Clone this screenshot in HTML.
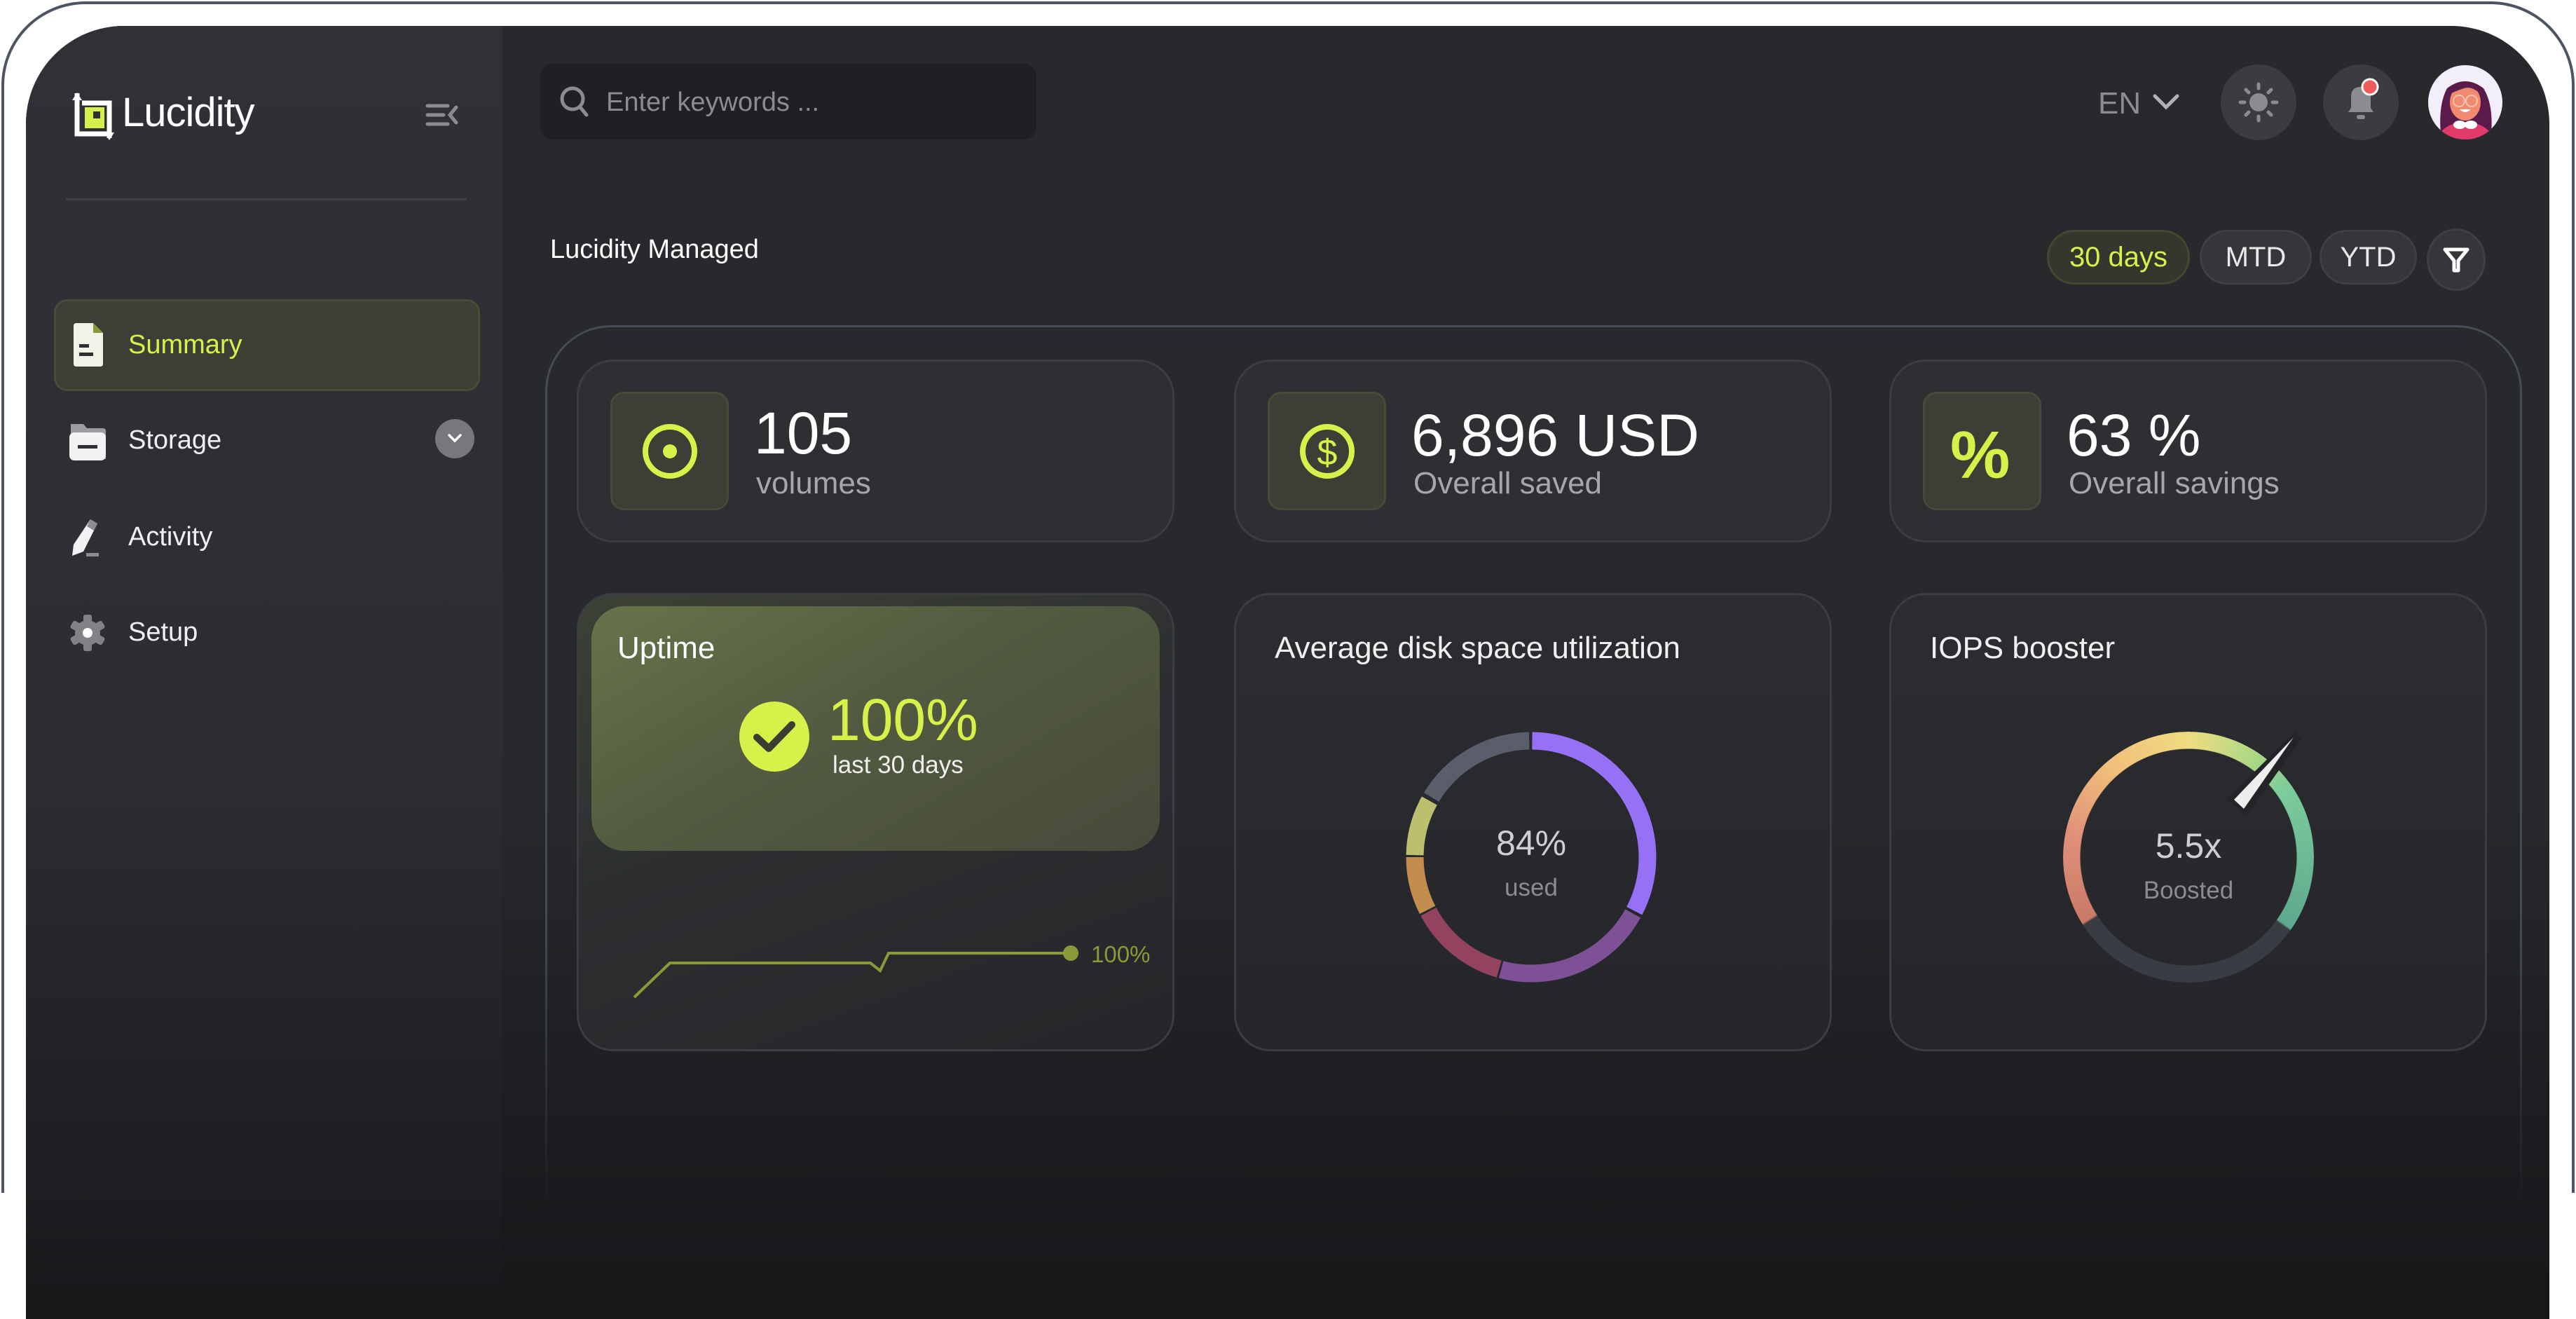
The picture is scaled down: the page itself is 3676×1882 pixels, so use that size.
<!DOCTYPE html>
<html><head><meta charset="utf-8"><style>
*{margin:0;padding:0;box-sizing:border-box}
body{width:3676px;height:1882px;background:#fff;position:relative;overflow:hidden;font-family:"Liberation Sans",sans-serif}
.abs{position:absolute}
.frame{left:2px;top:2px;width:3672px;height:1700px;border:4px solid #4d5462;border-bottom:none;border-radius:120px 120px 0 0;}
.panel{left:37px;top:37px;width:3601px;height:1845px;border-radius:140px 140px 0 0;overflow:hidden;background:linear-gradient(180deg,#28292d 0%,#27292c 60%,#1c1d20 85%,#161719 100%)}
.side{left:0;top:0;width:680px;height:1845px;background:linear-gradient(180deg,#2f3136 0%,#2c2e33 55%,#1d1e21 90%,#161719 100%)}
.t{position:absolute;white-space:nowrap;line-height:1}
.card{position:absolute;background:#2e2f33;border:3px solid #3b3d42;border-radius:52px}
.ib{position:absolute;left:45px;top:43px;width:169px;height:169px;background:#3c3f35;border:3px solid #474a36;border-radius:19px}
.pill{position:absolute;top:291px;height:78px;border-radius:39px;background:#35363a;border:3px solid #3e4045;color:#e9e9ea;font-size:40px;display:flex;align-items:center;justify-content:center}
</style></head><body>
<div class="abs frame"></div>
<div class="abs panel">
 <div class="abs side"></div>
 <!-- logo -->
 <svg class="abs" style="left:66px;top:92px" width="60" height="72" viewBox="0 0 60 72">
  <path d="M7 4 L7 62 L50 62" stroke="#fff" stroke-width="7" fill="none"/>
  <path d="M0 14 L7 3 L14 14Z" fill="#fff"/>
  <path d="M14 18 L53 18 L53 68" stroke="#fff" stroke-width="7" fill="none"/>
  <path d="M46 60 L53 71 L60 60Z" fill="#fff"/>
  <rect x="18" y="24" width="28" height="30" fill="#d5f04a"/>
  <rect x="30" y="30" width="10" height="10" fill="#2f3136"/>
 </svg>
 <div class="t" style="left:137px;top:95px;font-size:58px;color:#fff;letter-spacing:-1px">Lucidity</div>
 <svg class="abs" style="left:570px;top:110px" width="50" height="34" viewBox="0 0 50 34">
  <g stroke="#8a8c90" stroke-width="5" stroke-linecap="round"><path d="M3 4H32M3 17H26M3 30H32M44 6L35 17L44 28" fill="none"/></g>
 </svg>
 <div class="abs" style="left:57px;top:246px;width:572px;height:3px;background:#3e4046"></div>
 <!-- menu -->
 <div class="abs" style="left:40px;top:390px;width:608px;height:131px;background:#3c3f35;border:3px solid #4a4d36;border-radius:19px"></div>
 <svg class="abs" style="left:64px;top:420px" width="50" height="70" viewBox="0 0 50 70"><path d="M6 4H32L46 18V62Q46 66 42 66H8Q4 66 4 62V8Q4 4 8 4Z" fill="#f1f3e8"/><path d="M32 4L46 18H32Z" fill="#8a9a3a"/><rect x="12" y="34" width="14" height="5" fill="#2f3136"/><rect x="12" y="46" width="20" height="5" fill="#2f3136"/></svg>
 <div class="t" style="left:146px;top:436px;font-size:38px;color:#d8f04a">Summary</div>
 <svg class="abs" style="left:60px;top:564px" width="56" height="58" viewBox="0 0 56 58"><path d="M4 4H22L27 10H50Q54 10 54 14V54H4Z" fill="#9a9ca0"/><rect x="2" y="16" width="52" height="40" rx="7" fill="#f2f2f2"/><rect x="14" y="34" width="28" height="5" fill="#2f3136"/></svg>
 <div class="t" style="left:146px;top:572px;font-size:38px;color:#f0f0f0">Storage</div>
 <div class="abs" style="left:584px;top:561px;width:56px;height:56px;border-radius:50%;background:#76787c"></div>
 <svg class="abs" style="left:600px;top:580px" width="24" height="16" viewBox="0 0 24 16"><path d="M4 4L12 12L20 4" stroke="#fff" stroke-width="3.5" fill="none" stroke-linecap="round"/></svg>
 <svg class="abs" style="left:62px;top:700px" width="56" height="60" viewBox="0 0 56 60"><path d="M30 4L40 10L20 50L4 56L6 40Z" fill="#f2f2f2"/><path d="M30 4L40 10L35 20L25 14Z" fill="#8a8c90"/><rect x="24" y="52" width="18" height="5" fill="#8a8c90"/></svg>
 <div class="t" style="left:146px;top:710px;font-size:38px;color:#f0f0f0">Activity</div>
 <svg class="abs" style="left:60px;top:838px" width="56" height="56" viewBox="0 0 56 56"><g fill="#808286"><circle cx="28" cy="28" r="18"/><rect x="22" y="2" width="12" height="52" rx="3"/><rect x="22" y="2" width="12" height="52" rx="3" transform="rotate(60 28 28)"/><rect x="22" y="2" width="12" height="52" rx="3" transform="rotate(120 28 28)"/></g><circle cx="28" cy="28" r="7" fill="#fff"/></svg>
 <div class="t" style="left:146px;top:846px;font-size:38px;color:#f0f0f0">Setup</div>

 <!-- search -->
 <div class="abs" style="left:734px;top:54px;width:708px;height:108px;background:#1f2023;border-radius:18px"></div>
 <svg class="abs" style="left:760px;top:84px" width="44" height="48" viewBox="0 0 44 48"><circle cx="20" cy="20" r="15" stroke="#8a8c90" stroke-width="5" fill="none"/><path d="M31 32L40 43" stroke="#8a8c90" stroke-width="5" stroke-linecap="round"/></svg>
 <div class="t" style="left:828px;top:90px;font-size:38px;color:#8a8c90">Enter keywords ...</div>

 <div class="t" style="left:2957px;top:89px;font-size:44px;color:#8a8c90">EN</div>
 <svg class="abs" style="left:3034px;top:96px" width="40" height="26" viewBox="0 0 40 26"><path d="M4 4L20 20L36 4" stroke="#b0b2b5" stroke-width="5" fill="none" stroke-linecap="round"/></svg>
 <div class="abs" style="left:3132px;top:55px;width:108px;height:108px;border-radius:50%;background:#3a3c40"></div>
 <svg class="abs" style="left:3146px;top:69px" width="80" height="80" viewBox="0 0 80 80"><circle cx="40" cy="40" r="13" fill="#8a8c90"/><g stroke="#8a8c90" stroke-width="5" stroke-linecap="round"><path d="M40 14V20M40 60V66M14 40H20M60 40H66M22 22L26 26M54 54L58 58M58 22L54 26M26 54L22 58"/></g></svg>
 <div class="abs" style="left:3278px;top:55px;width:108px;height:108px;border-radius:50%;background:#3a3c40"></div>
 <svg class="abs" style="left:3292px;top:69px" width="80" height="80" viewBox="0 0 80 80"><path d="M40 18Q26 18 26 32V48L22 54H58L54 48V32Q54 18 40 18Z" fill="#8a8c90"/><rect x="34" y="58" width="12" height="6" rx="3" fill="#8a8c90"/><circle cx="53" cy="18" r="11" fill="#ef5a5a" stroke="#fff" stroke-width="3"/></svg>
 <svg class="abs" style="left:3427px;top:55px" width="108" height="108" viewBox="0 0 108 108"><defs><clipPath id="av"><circle cx="54" cy="54" r="53"/></clipPath></defs><g clip-path="url(#av)"><rect width="108" height="108" fill="#f3eefb"/><path d="M20 108Q14 60 28 34Q54 14 80 34Q96 60 90 108Z" fill="#5a1a4a"/><ellipse cx="54" cy="54" rx="22" ry="26" fill="#f08a70"/><path d="M32 42Q40 24 56 26Q74 26 78 44Q64 30 52 34Q40 38 32 42Z" fill="#5a1a4a"/><circle cx="45" cy="52" r="8" fill="none" stroke="#f5c0b0" stroke-width="2"/><circle cx="63" cy="52" r="8" fill="none" stroke="#f5c0b0" stroke-width="2"/><path d="M46 64Q54 72 62 64Z" fill="#fff"/><path d="M14 108Q20 84 54 82Q88 84 94 108Z" fill="#e23a6a"/><ellipse cx="46" cy="86" rx="9" ry="6" fill="#fff"/><ellipse cx="62" cy="86" rx="9" ry="6" fill="#fff"/></g></svg>

 <div class="t" style="left:748px;top:300px;font-size:38px;color:#fff">Lucidity Managed</div>
 <div class="pill" style="left:2884px;width:204px;background:#35372e;border-color:#45472f;color:#d8f04a">30 days</div>
 <div class="pill" style="left:3102px;width:160px">MTD</div>
 <div class="pill" style="left:3273px;width:139px">YTD</div>
 <div class="pill" style="left:3426px;top:289px;width:84px;height:89px;border-radius:50%"></div>
 <svg class="abs" style="left:3447px;top:313px" width="42" height="42" viewBox="0 0 42 42"><path d="M5 6H37L24 22V36H18V22Z" fill="none" stroke="#fff" stroke-width="5" stroke-linejoin="round"/></svg>

 <!-- big container -->
 <div class="abs" style="left:741px;top:427px;width:2821px;height:1400px;border:3px solid #474b55;border-bottom:none;border-radius:94px 94px 0 0;-webkit-mask:linear-gradient(#000 60%,transparent 90%);mask:linear-gradient(#000 60%,transparent 90%)"></div>

 <!-- stat cards -->
 <div class="card" style="left:786px;top:476px;width:853px;height:261px"><div class="ib"></div>
  <svg class="abs" style="left:87px;top:85px" width="86" height="86" viewBox="0 0 86 86"><circle cx="43" cy="43" r="35" stroke="#d8f04a" stroke-width="8" fill="none"/><circle cx="43" cy="43" r="10" fill="#d8f04a"/></svg>
  <div class="t" style="left:250px;top:60px;font-size:84px;color:#fff">105</div>
  <div class="t" style="left:253px;top:152px;font-size:44px;color:#a5a7aa">volumes</div></div>
 <div class="card" style="left:1724px;top:476px;width:853px;height:261px"><div class="ib"></div>
  <svg class="abs" style="left:87px;top:85px" width="86" height="86" viewBox="0 0 86 86"><circle cx="43" cy="43" r="35" stroke="#d8f04a" stroke-width="8" fill="none"/><text x="43" y="62" text-anchor="middle" font-family="Liberation Sans" font-size="52" fill="#d8f04a">$</text></svg>
  <div class="t" style="left:250px;top:63px;font-size:84px;color:#fff">6,896 USD</div>
  <div class="t" style="left:253px;top:152px;font-size:44px;color:#a5a7aa">Overall saved</div></div>
 <div class="card" style="left:2659px;top:476px;width:853px;height:261px"><div class="ib"></div>
  <div class="t" style="left:84px;top:86px;font-size:96px;font-weight:bold;color:#d8f04a">%</div>
  <div class="t" style="left:250px;top:63px;font-size:84px;color:#fff">63 %</div>
  <div class="t" style="left:253px;top:152px;font-size:44px;color:#a5a7aa">Overall savings</div></div>

 <!-- uptime -->
 <div class="card" style="left:786px;top:809px;width:853px;height:654px;background:linear-gradient(160deg,#3d4235 0%,#2c2e30 45%,#252629 100%)"></div>
 <div class="abs" style="left:807px;top:828px;width:811px;height:349px;border-radius:47px;background:linear-gradient(150deg,#67744a 0%,#525b40 45%,#474a3a 100%)"></div>
 <div class="t" style="left:844px;top:866px;font-size:44px;color:#fff">Uptime</div>
 <svg class="abs" style="left:1017px;top:963px" width="102" height="102" viewBox="0 0 102 102"><circle cx="51" cy="51" r="50" fill="#d8f04a"/><path d="M26 52L43 68L76 34" stroke="#3a3d30" stroke-width="10" fill="none" stroke-linecap="round" stroke-linejoin="round"/></svg>
 <div class="t" style="left:1144px;top:948px;font-size:84px;color:#d8f04a">100%</div>
 <div class="t" style="left:1151px;top:1037px;font-size:35px;color:#f0f0f0">last 30 days</div>
 <svg class="abs" style="left:0;top:0" width="1650" height="1450"><polyline points="868,1386 919,1337 1205,1337 1219,1348 1231,1323 1491,1323" fill="none" stroke="#8a9a3a" stroke-width="4"/><circle cx="1491" cy="1323" r="11" fill="#8a9a3a"/></svg>
 <div class="t" style="left:1520px;top:1308px;font-size:33px;color:#8a9a3a">100%</div>

 <!-- disk -->
 <div class="card" style="left:1724px;top:809px;width:853px;height:654px;background:linear-gradient(180deg,#2c2d31,#252629)"></div>
 <div class="t" style="left:1782px;top:866px;font-size:44px;color:#f0f0f0">Average disk space utilization</div>
 <svg class="abs" style="left:1948px;top:986px" width="400" height="400" viewBox="-200 -200 400 400">
  <g transform="rotate(-90)" fill="none" stroke-width="25">
   <circle r="166" pathLength="360" stroke="#9670f5" stroke-dasharray="117 360" stroke-dashoffset="-0.5"/>
   <circle r="166" pathLength="360" stroke="#7e5096" stroke-dasharray="76 360" stroke-dashoffset="-119"/>
   <circle r="166" pathLength="360" stroke="#93435f" stroke-dasharray="46 360" stroke-dashoffset="-196"/>
   <circle r="166" pathLength="360" stroke="#c38d4e" stroke-dasharray="27 360" stroke-dashoffset="-243"/>
   <circle r="166" pathLength="360" stroke="#bcc06e" stroke-dasharray="28 360" stroke-dashoffset="-271"/>
   <circle r="166" pathLength="360" stroke="#5a5e6a" stroke-dasharray="58 360" stroke-dashoffset="-301"/>
  </g>
  <text x="0" y="-3" text-anchor="middle" font-family="Liberation Sans" font-size="50" fill="#cfcfd1">84%</text>
  <text x="0" y="55" text-anchor="middle" font-family="Liberation Sans" font-size="35" fill="#8a8c90">used</text>
 </svg>

 <!-- iops -->
 <div class="card" style="left:2659px;top:809px;width:853px;height:654px;background:linear-gradient(180deg,#2c2d31,#252629)"></div>
 <div class="t" style="left:2717px;top:866px;font-size:44px;color:#f0f0f0">IOPS booster</div>
 <div class="abs" style="left:2907px;top:1007px;width:358px;height:358px;border-radius:50%;background:conic-gradient(from 0deg,#f0dc80 0deg,#a8d884 35deg,#7ccc9c 55deg,#5ea88e 125deg,#3a3c44 126deg,#3a3c44 237deg,#c97a66 238deg,#e0907a 280deg,#f0c07a 320deg,#f0dc80 360deg);-webkit-mask:radial-gradient(circle,transparent 154px,#000 155px);mask:radial-gradient(circle,transparent 154px,#000 155px)"></div>
 <svg class="abs" style="left:2907px;top:1007px;overflow:visible" width="358" height="358" viewBox="0 0 358 358">
  <path d="M234 96L331 0L340 10L262 120Z" fill="#232428"/>
  <path d="M244 97L329 8L258 110Z" fill="#eeeeee"/>
  <text x="179" y="180" text-anchor="middle" font-family="Liberation Sans" font-size="50" fill="#cfcfd1">5.5x</text>
  <text x="179" y="238" text-anchor="middle" font-family="Liberation Sans" font-size="35" fill="#8a8c90">Boosted</text>
 </svg>
</div>
</body></html>
